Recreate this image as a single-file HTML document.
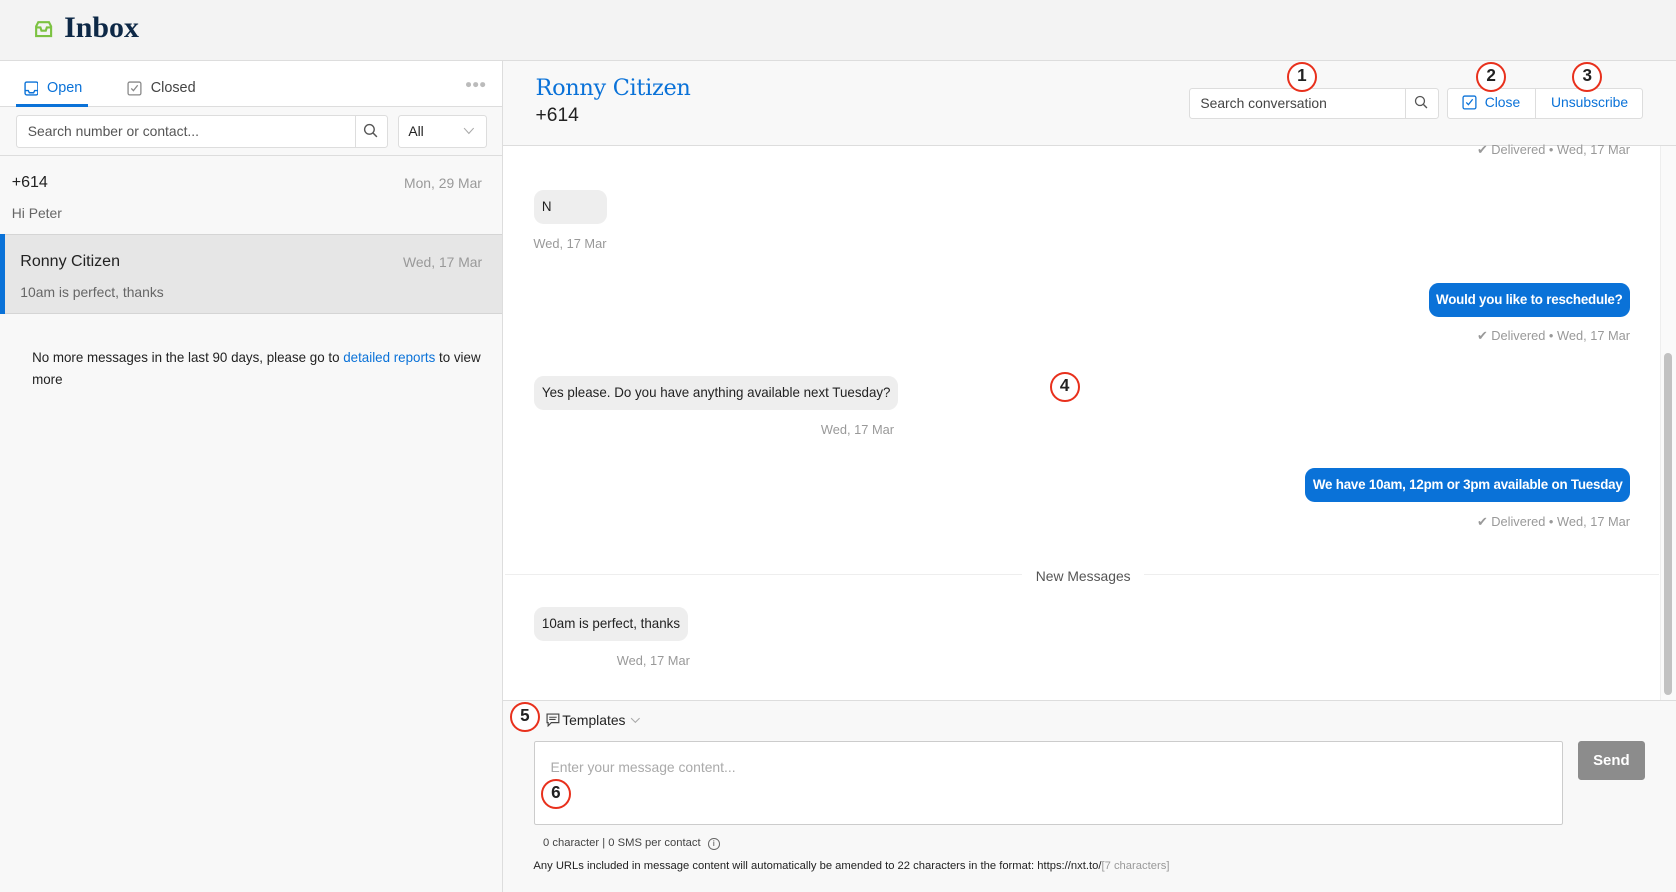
<!DOCTYPE html>
<html><head><meta charset="utf-8"><style>
*{box-sizing:border-box;margin:0;padding:0}
html,body{width:1676px;height:892px;overflow:hidden;background:#f8f8f8}
#z{zoom:1.0689;width:1568px;height:835px;position:relative;font-family:"Liberation Sans",sans-serif;color:#222}
.a{position:absolute}
.hdr{left:0;top:0;width:1568px;height:57px;background:#f3f3f3;border-bottom:1px solid #ddd}
.left{left:0;top:57px;width:471px;height:778px;background:#f8f8f8;border-right:1px solid #ddd}
.g{color:#999}
.circ{width:28px;height:28px;border:2.5px solid #e8301c;border-radius:50%;background:#fff;color:#222;font-weight:bold;font-size:16px;text-align:center;line-height:23px}
.bub{background:#eeeeee;border-radius:9px;font-size:12.5px;padding:0 7px;height:32px;line-height:32px}
.blue{background:#0a72d8;color:#fff;border-radius:9px;font-size:12.5px;padding:0 7px;height:32px;line-height:32px;font-weight:bold;letter-spacing:-0.2px}
.sm{font-size:12px;color:#999}
</style></head><body><div id="z">
<div class="a hdr"></div>
<svg class="a" style="left:32px;top:19px" width="18" height="18" viewBox="0 0 18 18"><path d="M2 6 L4 2 H14 L16 6 V15 H2 Z M2 7 H6 L7 10 H11 L12 7 H16" fill="none" stroke="#7cc242" stroke-width="2"/></svg>
<div class="a" style="left:60px;top:10px;font-family:'Liberation Serif',serif;font-weight:bold;font-size:28px;color:#0d2846">Inbox</div>

<div class="a left"></div>
<div class="a" style="left:0;top:57px;width:470px;height:43px;background:#fff;border-bottom:1px solid #ddd"></div>
<svg class="a" style="left:22px;top:76px" width="14" height="14" viewBox="0 0 14 14"><rect x="1" y="1" width="12" height="12" rx="1.5" fill="none" stroke="#0a72d8" stroke-width="1.3"/><path d="M1 9 H4 L5 11 H9 L10 9 H13" fill="none" stroke="#0a72d8" stroke-width="1.3"/></svg>
<div class="a" style="left:44px;top:75px;font-size:13.5px;color:#0a72d8">Open</div>
<div class="a" style="left:15px;top:97px;width:67px;height:3px;background:#0a72d8"></div>
<svg class="a" style="left:119px;top:76px" width="14" height="14" viewBox="0 0 14 14"><rect x="1" y="1" width="12" height="12" rx="1.5" fill="none" stroke="#888" stroke-width="1.2"/><path d="M4 7 L6 9 L10 4" fill="none" stroke="#888" stroke-width="1.2"/></svg>
<div class="a" style="left:141px;top:75px;font-size:13.5px;color:#444">Closed</div>
<div class="a" style="left:435px;top:73px;font-size:11px;color:#bbb;letter-spacing:0px">●●●</div>
<div class="a" style="left:15px;top:108px;width:348px;height:30px;background:#fff;border:1px solid #ddd;border-radius:3px"></div>
<div class="a" style="left:26px;top:115px;font-size:13px;color:#555">Search number or contact...</div>
<div class="a" style="left:332px;top:108px;width:1px;height:30px;background:#ddd"></div>
<svg class="a" style="left:340px;top:115px" width="15" height="15" viewBox="0 0 15 15"><circle cx="6" cy="6" r="4.5" fill="none" stroke="#555" stroke-width="1.3"/><path d="M9.5 9.5 L13 13" stroke="#555" stroke-width="1.4"/></svg>
<div class="a" style="left:372px;top:108px;width:84px;height:30px;background:#fff;border:1px solid #ddd;border-radius:3px"></div>
<div class="a" style="left:382px;top:115px;font-size:13px">All</div>
<svg class="a" style="left:433px;top:119px" width="11" height="7" viewBox="0 0 11 7"><path d="M1 1 L5.5 6 L10 1" fill="none" stroke="#aaa"/></svg>
<div class="a" style="left:0;top:145px;width:470px;height:1px;background:#ddd"></div>
<div class="a" style="left:11px;top:162px;font-size:15px">+614</div>
<div class="a g" style="left:378px;top:164px;font-size:13px">Mon, 29 Mar</div>
<div class="a" style="left:11px;top:192px;font-size:13px;color:#666">Hi Peter</div>
<div class="a" style="left:0;top:219px;width:470px;height:75px;background:#e6e6e6;border-top:1px solid #d5d5d5;border-bottom:1px solid #d5d5d5"></div>
<div class="a" style="left:0;top:219px;width:5px;height:75px;background:#0a72d8"></div>
<div class="a" style="left:19px;top:236px;font-size:15px">Ronny Citizen</div>
<div class="a g" style="left:377px;top:238px;font-size:13px">Wed, 17 Mar</div>
<div class="a" style="left:19px;top:266px;font-size:13px;color:#666">10am is perfect, thanks</div>
<div class="a" style="left:30px;top:325px;width:420px;font-size:12.5px;line-height:20px;color:#222">No more messages in the last 90 days, please go to <span style="color:#0a72d8">detailed reports</span> to view more</div>

<div class="a" style="left:471px;top:57px;width:1097px;height:80px;background:#f8f8f8;border-bottom:1px solid #ddd"></div>
<div class="a" style="left:501px;top:70px;font-size:21px;color:#0a72d8;font-family:'DejaVu Serif','Liberation Serif',serif;letter-spacing:-0.3px">Ronny Citizen</div>
<div class="a" style="left:501px;top:98px;font-size:18px">+614</div>
<div class="a" style="left:1112px;top:82px;width:234px;height:29px;background:#fff;border:1px solid #ddd;border-radius:3px"></div>
<div class="a" style="left:1123px;top:89px;font-size:13px;color:#444">Search conversation</div>
<div class="a" style="left:1314px;top:82px;width:1px;height:29px;background:#ddd"></div>
<svg class="a" style="left:1323px;top:89px" width="14" height="14" viewBox="0 0 15 15"><circle cx="6" cy="6" r="4.5" fill="none" stroke="#555" stroke-width="1.3"/><path d="M9.5 9.5 L13 13" stroke="#555" stroke-width="1.4"/></svg>
<div class="a" style="left:1354px;top:82px;width:183px;height:29px;background:#fff;border:1px solid #ddd;border-radius:3px"></div>
<div class="a" style="left:1436px;top:82px;width:1px;height:29px;background:#ddd"></div>
<svg class="a" style="left:1368px;top:89px" width="14" height="14" viewBox="0 0 14 14"><rect x="1" y="1" width="12" height="12" rx="1.5" fill="none" stroke="#0a72d8" stroke-width="1.2"/><path d="M4 7 L6 9 L10 4" fill="none" stroke="#0a72d8" stroke-width="1.2"/></svg>
<div class="a" style="left:1389px;top:88px;font-size:13px;color:#0a72d8">Close</div>
<div class="a" style="left:1451px;top:88px;font-size:13px;color:#0a72d8">Unsubscribe</div>

<div class="a" style="left:471px;top:137px;width:1097px;height:518px;background:#fff"></div>
<div class="a" style="left:1553px;top:137px;width:15px;height:518px;background:#fafafa;border-left:1px solid #eee"></div>
<div class="a" style="left:1557px;top:330px;width:7px;height:320px;background:#c2c2c2;border-radius:4px"></div>
<div class="a sm" style="right:43px;top:133px">✔ Delivered • Wed, 17 Mar</div>
<div class="a bub" style="left:500px;top:178px;width:68px">N</div>
<div class="a sm" style="left:499px;top:221px">Wed, 17 Mar</div>
<div class="a blue" style="right:43px;top:265px">Would you like to reschedule?</div>
<div class="a sm" style="right:43px;top:307px">✔ Delivered • Wed, 17 Mar</div>
<div class="a bub" style="left:500px;top:352px">Yes please. Do you have anything available next Tuesday?</div>
<div class="a sm" style="left:768px;top:395px">Wed, 17 Mar</div>
<div class="a blue" style="right:43px;top:438px">We have 10am, 12pm or 3pm available on Tuesday</div>
<div class="a sm" style="right:43px;top:481px">✔ Delivered • Wed, 17 Mar</div>
<div class="a" style="left:472px;top:537px;width:484px;height:1px;background:#eee"></div>
<div class="a" style="left:1070px;top:537px;width:482px;height:1px;background:#eee"></div>
<div class="a" style="left:969px;top:531px;font-size:13px;color:#555">New Messages</div>
<div class="a bub" style="left:500px;top:568px">10am is perfect, thanks</div>
<div class="a sm" style="left:577px;top:611px">Wed, 17 Mar</div>

<div class="a" style="left:471px;top:655px;width:1097px;height:180px;background:#f8f8f8;border-top:1px solid #ddd"></div>
<svg class="a" style="left:511px;top:667px" width="13" height="13" viewBox="0 0 13 13"><path d="M1 1 H12 V9 H5 L2 12 V9 H1 Z" fill="none" stroke="#444" stroke-width="1.1"/><path d="M3 4 H10 M3 6 H9" stroke="#444"/></svg>
<div class="a" style="left:526px;top:666px;font-size:13px">Templates</div>
<svg class="a" style="left:589px;top:671px" width="10" height="6" viewBox="0 0 10 6"><path d="M1 1 L5 5 L9 1" fill="none" stroke="#aaa"/></svg>
<div class="a" style="left:500px;top:693px;width:962px;height:79px;background:#fff;border:1px solid #ccc;border-radius:2px"></div>
<div class="a" style="left:515px;top:710px;font-size:13px;color:#aaa">Enter your message content...</div>
<div class="a" style="left:1476px;top:693px;width:63px;height:37px;background:#8c8c8c;border-radius:3px;color:#fff;font-size:14px;font-weight:bold;text-align:center;line-height:37px">Send</div>
<div class="a" style="left:508px;top:783px;font-size:10.5px;color:#444">0 character | 0 SMS per contact <span style="display:inline-block;width:11px;height:11px;border:1px solid #666;border-radius:50%;font-size:8px;text-align:center;line-height:9px;margin-left:4px">i</span></div>
<div class="a" style="left:499px;top:805px;font-size:10.5px;color:#222">Any URLs included in message content will automatically be amended to 22 characters in the format: https://nxt.to/<span style="color:#999">[7 characters]</span></div>

<div class="a circ" style="left:1204px;top:58px">1</div>
<div class="a circ" style="left:1381px;top:58px">2</div>
<div class="a circ" style="left:1471px;top:58px">3</div>
<div class="a circ" style="left:982px;top:348px">4</div>
<div class="a circ" style="left:477px;top:657px">5</div>
<div class="a circ" style="left:506px;top:729px">6</div>
</div></body></html>
